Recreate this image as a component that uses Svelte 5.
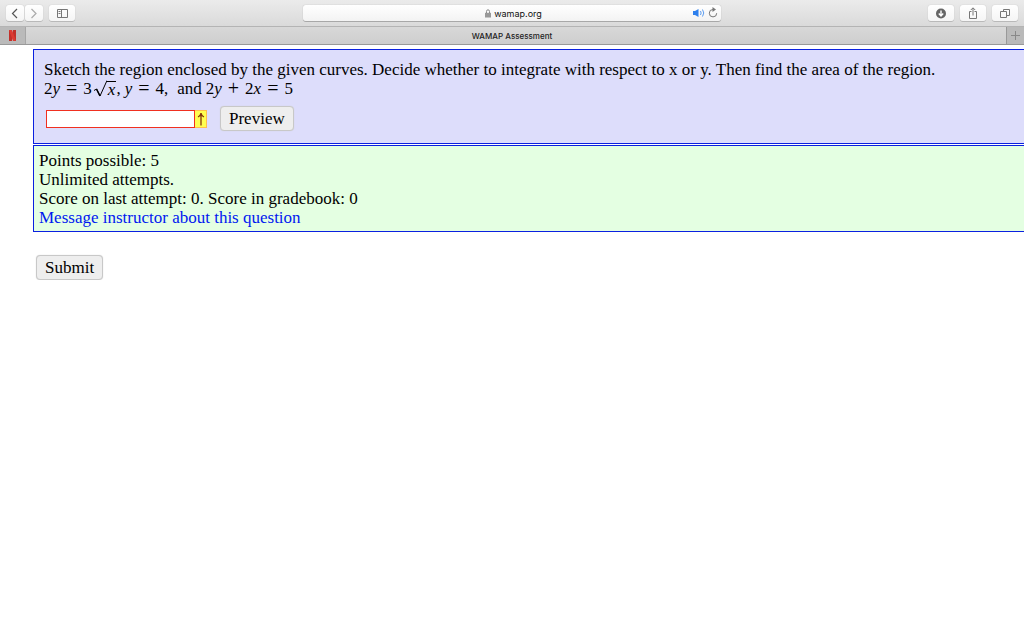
<script>
  const scores = [
    'Points possible: 5',
    'Unlimited attempts.',
    'Score on last attempt: 0. Score in gradebook: 0',
  ];

  let address = $state('wamap.org');
  let answer = $state('');
</script>

<div class="browser">
  <header class="toolbar">
    <div class="group">
      <button type="button" class="tool nav" aria-label="Back">
        <svg width="18" height="15" viewBox="0 0 18 15"><path d="M11 3 6.500 7.500 11 12" stroke="#555" stroke-width="1.200" /></svg>
      </button>
      <button type="button" class="tool nav" aria-label="Forward">
        <svg width="18" height="15" viewBox="0 0 18 15"><path d="M6.500 3 11 7.500 6.500 12" stroke="#aaa" stroke-width="1.200" /></svg>
      </button>
      <button type="button" class="tool sidebar" aria-label="Show sidebar">
        <svg width="18" height="15" viewBox="0 0 18 15"><path d="M4.500 3.500h10v8h-10zM8.500 3.500v8M5.500 5.500h2M5.500 7.500h2" stroke="#777" /></svg>
      </button>
    </div>

    <div class="address">
      <label class="site">
        <svg width="6" height="9" viewBox="0 0 6 9" aria-hidden="true">
          <path d="M1.500 4V2.500a1.500 1.700 0 0 1 3 0V4" stroke="#888" />
          <path d="M0 3.800h6V8.500H0z" fill="#999" />
        </svg>
        <input type="text" aria-label="Address" bind:value={address} />
      </label>
      <button type="button" class="plain" aria-label="Mute tab">
        <svg width="12" height="12" viewBox="0 0 12 12">
          <path d="M0 4h2L5.500 2v8L2 8H0z" fill="#2f80ed" />
          <path d="M7.500 4q1.300 2 0 4M9.500 2.500q2.500 3.500 0 7" stroke="#5b9cf0" />
        </svg>
      </button>
      <button type="button" class="plain" aria-label="Reload">
        <svg width="10" height="12" viewBox="0 0 10 12">
          <path d="M5 2.500a3.700 3.700 0 1 0 3.700 3.700" stroke="#777" />
          <path d="M4.500 0 8 2.500 4.500 5z" fill="#777" />
        </svg>
      </button>
    </div>

    <div class="group right">
      <button type="button" class="tool" aria-label="Downloads">
        <svg width="18" height="15" viewBox="0 0 18 15"><circle cx="9" cy="7.500" r="5" fill="#666" /><path d="M9 4.500v5M6.800 7.500 9 9.900l2.200-2.400" stroke="#fff" stroke-width="1.400" /></svg>
      </button>
      <button type="button" class="tool" aria-label="Share">
        <svg width="18" height="15" viewBox="0 0 18 15"><path d="M7.500 5.500h-2v7h7v-7h-2M9 9.500V2M6.800 4 9 1.800 11.200 4" stroke="#777" /></svg>
      </button>
      <button type="button" class="tool" aria-label="Show all tabs">
        <svg width="18" height="15" viewBox="0 0 18 15"><path d="M4.500 5.500h6v6h-6zM7.500 5V3.500h6v6H11" stroke="#777" /></svg>
      </button>
    </div>
  </header>

  <nav class="tabs" aria-label="Tabs">
    <button type="button" class="pinned" aria-label="Pinned tab">
      <svg width="7" height="11" viewBox="0 0 7 11"><path d="M0 0h3v11H0zM4 0h3v11H4z" fill="#c0302a" /><path d="M0 0h3l4 11H4z" fill="#dc3a32" /></svg>
    </button>
    <button type="button" class="tab">WAMAP Assessment</button>
    <button type="button" class="new-tab" aria-label="New tab">
      <svg width="9" height="9" viewBox="0 0 9 9"><path d="M4.500 0v9M0 4.500h9" stroke="#888" /></svg>
    </button>
  </nav>
</div>

<main>
  <section class="question">
    <p>Sketch the region enclosed by the given curves. Decide whether to integrate with respect to x or y. Then find the area of the region.</p>
    <p class="math">
      <span>2<i>y</i></span>
      <span class="op">=</span>
      <span>3</span>
      <svg class="radical" width="14" height="17" viewBox="0 0 14 17" aria-label="square root of"><path d="M1 10.500 3.500 9l3.500 7L14 .5" stroke="#000" /><path d="M3.500 9l3.500 7" stroke="#000" stroke-width="1.500" /></svg>
      <span class="radicand"><i>x</i></span>
      <span class="comma">,</span>
      <span><i>y</i></span>
      <span class="op">=</span>
      <span>4,</span>
      <span class="word">and</span>
      <span>2<i>y</i></span>
      <span class="op">+</span>
      <span>2<i>x</i></span>
      <span class="op">=</span>
      <span>5</span>
    </p>
    <div class="answer">
      <input type="text" aria-label="Answer" bind:value={answer} />
      <span class="hint" aria-hidden="true">
        <svg width="8" height="14" viewBox="0 0 8 14"><path d="M4 13.500V1.500M1 5q2.500-1 3-4 .5 3 3 4" stroke="#84360c" stroke-width="1.300" /></svg>
      </span>
      <button type="button" class="action">Preview</button>
    </div>
  </section>

  <section class="review">
    {#each scores as line}
      <p>{line}</p>
    {/each}
    <p><a href="#message">Message instructor about this question</a></p>
  </section>

  <button type="submit" class="action submit">Submit</button>
</main>

<style>
  :global(body) {
    margin: 0;
    background: #fff;
  }

  button,
  input {
    box-sizing: border-box;
    margin: 0;
    padding: 0;
    border: none;
    font: inherit;
    color: inherit;
  }

  svg {
    display: block;
    fill: none;
    flex-shrink: 0;
  }

  p {
    margin: 0;
  }

  .browser {
    font-family: Inter, "Liberation Sans", sans-serif;
    color: #222;
  }

  .toolbar {
    display: grid;
    grid-template-columns: 1fr minmax(0, 418px) 1fr;
    align-items: center;
    height: 26px;
    padding: 0 6px;
    background: linear-gradient(#ebebeb, #dadada);
    border-bottom: 1px solid #b4b4b4;
  }

  .group {
    display: flex;
    gap: 1px;
  }

  .right {
    justify-content: flex-end;
    gap: 6px;
  }

  .tool {
    display: flex;
    align-items: center;
    justify-content: center;
    width: 26px;
    height: 16px;
    background: linear-gradient(#fff, #f5f5f5);
    border-radius: 3px;
    box-shadow: 0 0 1px #aaa, 0 1px 0 #bbb;
  }

  .nav {
    width: 18px;
  }

  .sidebar {
    margin-left: 5px;
  }

  .address {
    display: flex;
    align-items: center;
    gap: 3px;
    height: 16px;
    padding-right: 3px;
    background: linear-gradient(#fff, #f3f3f3);
    border-radius: 3px;
    box-shadow: 0 0 1px #999, 0 1px 0 #aaa;
  }

  .site {
    display: flex;
    flex: 1;
    align-items: center;
    justify-content: center;
    gap: 3px;
    padding-left: 34px;
  }

  .site input {
    field-sizing: content;
    padding-top: 1px;
    background: none;
    font-size: 9px;
    line-height: 12px;
    color: #111;
  }

  .plain {
    background: none;
  }

  .tabs {
    display: flex;
    height: 17px;
    background: linear-gradient(#d8d8d8, #cecece);
    border-bottom: 1px solid #999;
  }

  .tabs button {
    display: flex;
    align-items: center;
    justify-content: center;
    background: none;
  }

  .tabs .pinned {
    width: 26px;
    background: #bababa;
    border-right: 1px solid #a6a6a6;
  }

  .tabs .tab {
    flex: 1;
    font-size: 8px;
    font-weight: 500;
    padding-right: 8px;
  }

  .tabs .new-tab {
    width: 18px;
    background: #bababa;
    border-left: 1px solid #999;
  }

  main {
    padding: 4px 0 0 33px;
    font: 17px/19px "Liberation Serif", "Times New Roman", serif;
    color: #000;
  }

  .question,
  .review {
    border: 1px solid #0a20e0;
    border-right: none;
  }

  .question {
    padding: 10px 10px 12px;
    background: #ddddfb;
  }

  .math {
    display: flex;
    align-items: center;
    white-space: nowrap;
  }

  .op {
    margin: 0 6px;
    font-size: 20px;
  }

  .radical {
    margin-left: 1px;
  }

  .radicand {
    height: 15px;
    line-height: 15px;
    padding: 0 1px;
    border-top: 1px solid #000;
  }

  .comma {
    margin-right: 4px;
  }

  .word {
    margin: 0 4px 0 9px;
  }

  .answer {
    display: flex;
    align-items: center;
    margin-top: 8px;
    padding-left: 2px;
  }

  .answer input {
    width: 149px;
    height: 18px;
    padding: 0 3px;
    background: #fff;
    border: 1px solid #f03020;
  }

  .answer input:focus {
    outline: none;
  }

  .hint {
    display: flex;
    align-items: center;
    justify-content: center;
    box-sizing: border-box;
    width: 12px;
    height: 18px;
    background: #ffff50;
    border: 1px solid #ffc04c;
    border-left: none;
  }

  .action {
    height: 25px;
    padding: 0 8px;
    background: #eee;
    border: 1px solid #c8c8c8;
    border-radius: 4px;
    box-shadow: 0 0 1px #ccc;
  }

  .hint + .action {
    margin-left: 13px;
  }

  .review {
    margin-top: 1px;
    padding: 5px 5px 4px;
    background: #e4ffe2;
  }

  .review a {
    color: #0018f0;
    text-decoration: none;
  }

  .submit {
    margin: 23px 0 0 3px;
  }
</style>
